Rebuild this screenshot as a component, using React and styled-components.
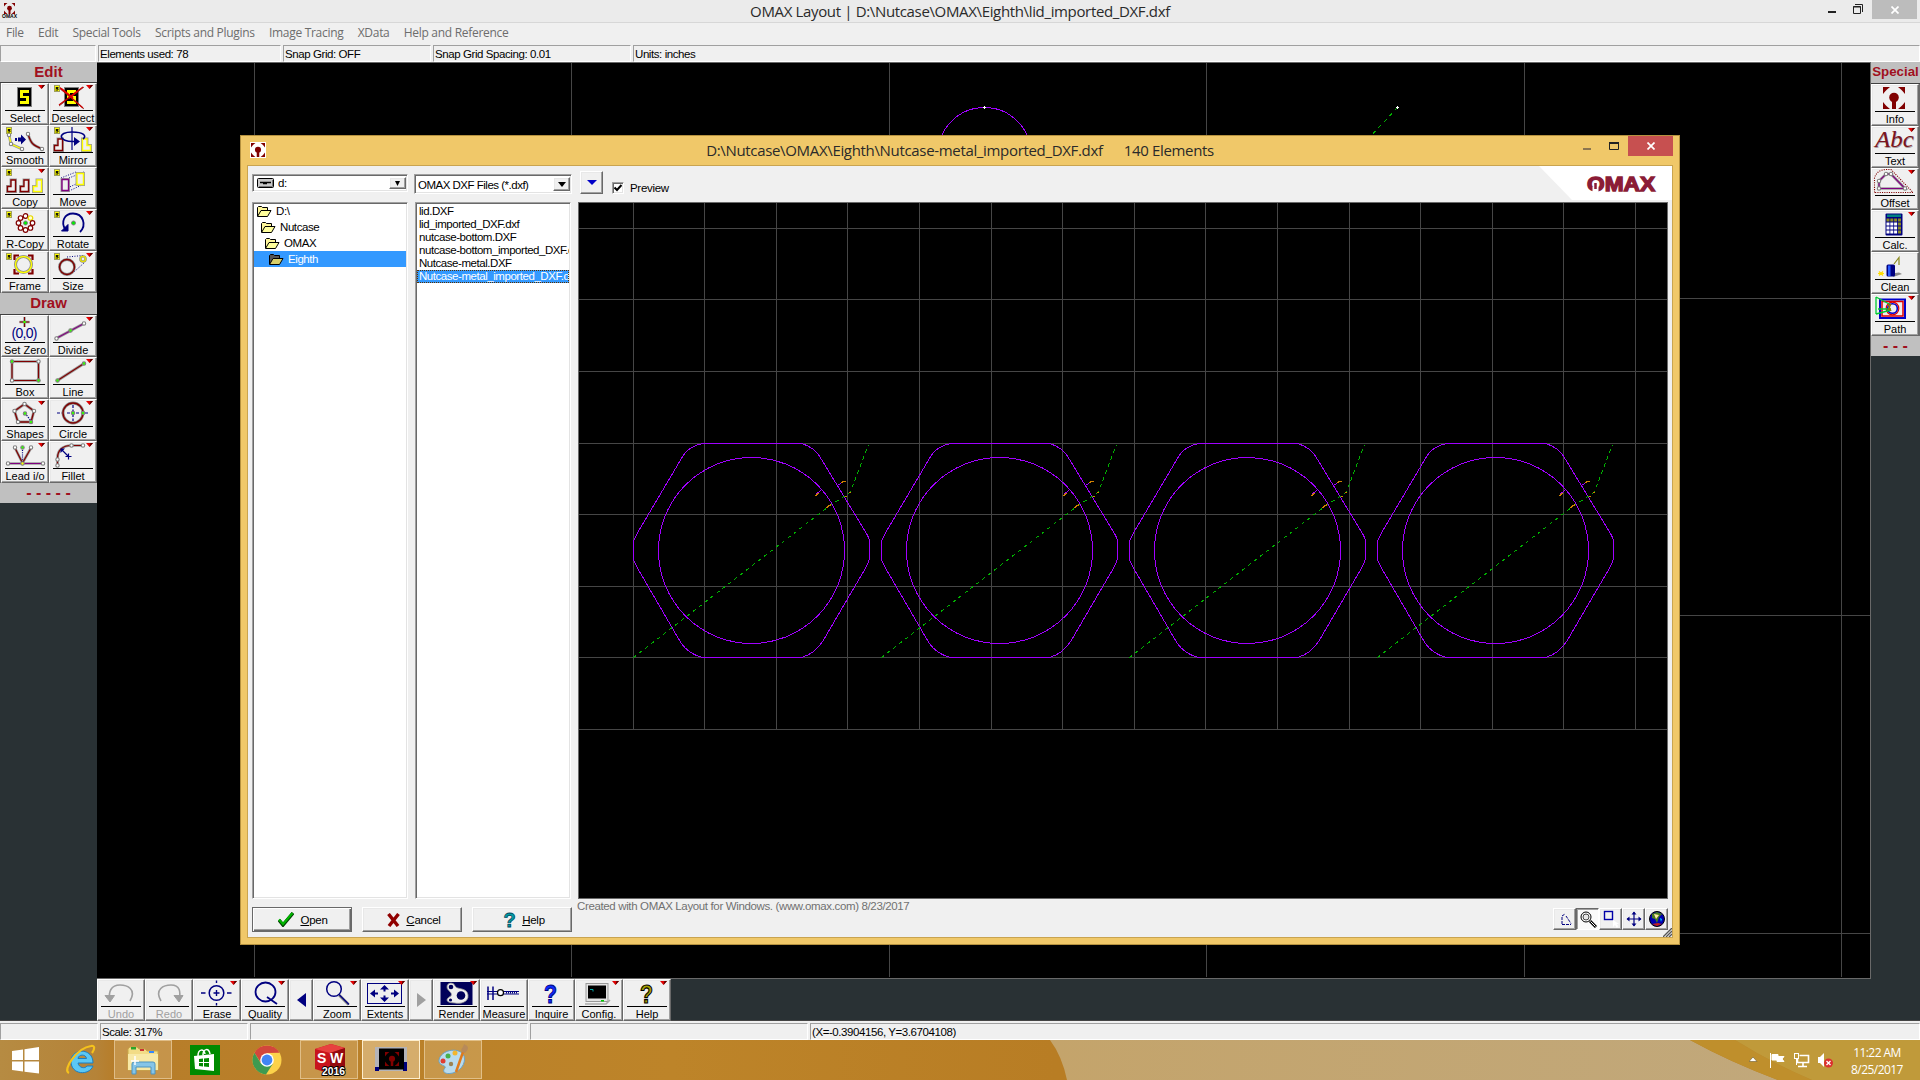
import React from 'react'
import styled, { createGlobalStyle, css } from 'styled-components'

const MAROON = '#800000'
const NAVY = '#000080'

const toolRows = {
  edit: [
    ['Select', 'select', 1, 0], ['Deselect', 'deselect', 1, 1],
    ['Smooth', 'smooth', 0, 1], ['Mirror', 'mirror', 1, 1],
    ['Copy', 'copy', 1, 1], ['Move', 'move', 0, 1],
    ['R-Copy', 'rcopy', 0, 1], ['Rotate', 'rotate', 1, 1],
    ['Frame', 'frame', 0, 1], ['Size', 'size', 1, 1],
  ],
  draw: [
    ['Set Zero', 'zero', 0, 0], ['Divide', 'divide', 1, 0],
    ['Box', 'box', 0, 0], ['Line', 'line', 1, 0],
    ['Shapes', 'shapes', 1, 0], ['Circle', 'circle', 1, 0],
    ['Lead i/o', 'lead', 1, 0], ['Fillet', 'fillet', 1, 0],
  ],
  special: [
    ['Info', 'info', 0, 0], ['Text', 'text', 1, 0], ['Offset', 'offset', 1, 0],
    ['Calc.', 'calc', 1, 0], ['Clean', 'clean', 0, 0], ['Path', 'path', 1, 0],
  ],
}

const bottomTools = [
  { label: 'Undo', icon: 'undo', w: 48, off: true },
  { label: 'Redo', icon: 'redo', w: 48, off: true },
  { label: 'Erase', icon: 'erase', w: 48, drop: true },
  { label: 'Quality', icon: 'quality', w: 48, drop: true },
  { arrow: 'left', w: 24 },
  { label: 'Zoom', icon: 'zoom', w: 48, drop: true },
  { label: 'Extents', icon: 'extents', w: 48, drop: true },
  { arrow: 'right', w: 24 },
  { label: 'Render', icon: 'render', w: 47, drop: true },
  { label: 'Measure', icon: 'measure', w: 48 },
  { label: 'Inquire', icon: 'inquire', w: 47 },
  { label: 'Config.', icon: 'config', w: 48, drop: true },
  { label: 'Help', icon: 'help', w: 48, drop: true },
]

const files = [
  'lid.DXF',
  'lid_imported_DXF.dxf',
  'nutcase-bottom.DXF',
  'nutcase-bottom_imported_DXF.dxf',
  'Nutcase-metal.DXF',
  'Nutcase-metal_imported_DXF.dxf',
]

const Node = ({ x, y, c = '#fff' }) => <circle cx={x} cy={y} r="1.700" fill={c} stroke="#808080" strokeWidth="1.100" />

const Outlined = ({ d, c, w = 1.4, fill = 'none' }) => (
  <>
    <path d={d} fill="none" stroke="#9a9a9a" strokeWidth={w + 1.5} />
    <path d={d} fill={fill} stroke={c} strokeWidth={w} />
  </>
)

const Boot = ({ x, y, c, flip }) => (
  <g transform={`translate(${x} ${y})${flip ? ' scale(-1 1)' : ''}`}>
    <Outlined d="M4 1H8.5V12.5H0.5V7.5H4Z" c={c} w={1.4} fill="#efefef" />
  </g>
)

const OmaxMark = ({ size, x = 0, y = 0 }) => (
  <svg x={x} y={y} width={size} height={size} viewBox="0 0 22 22">
    <path d="M0 0H7L4 2.5L2.5 4L0 7ZM22 0V7L19.500 4L18 2.500L15 0ZM0 22V15L2.500 18L4 19.500L7 22ZM22 22H15L18 19.500L19.500 18L22 15Z" fill={MAROON} />
    <circle cx="11" cy="10.500" r="4.800" fill={MAROON} />
    <path d="M9 13H13V22H9Z" fill={MAROON} />
  </svg>
)

const BigS = ({ x }) => (
  <g shapeRendering="crispEdges">
    <rect x={x} y="4" width="15" height="20" fill="#808080" />
    <rect x={x + 1} y="5" width="13" height="18" fill="#000" />
    <rect x={x + 3} y="7" width="9" height="14" fill="#ff0" />
    <rect x={x + 6} y="10" width="7" height="3" fill="#000" />
    <rect x={x + 2} y="15" width="7" height="3" fill="#000" />
  </g>
)

const icons = {
  select: <BigS x={16} />,
  deselect: (
    <>
      <BigS x={15} />
      <path d="M9 4L35 26M10 23L35 4" stroke="#600" strokeWidth="0.700" />
      <path d="M9 3L34 25M10 22L34 4" stroke="#c80000" strokeWidth="1.300" />
      <path d="M12 5.500L24 15M20 15L29 8" stroke="#d00" strokeWidth="1.600" />
    </>
  ),
  smooth: (
    <>
      <Outlined d="M8 10L10 19L21 24" c="#ff0" w={1.3} />
      <Outlined d="M27 9C30 19 32 20 41 24" c={MAROON} w={1.3} />
      <Node x={8} y={10} /><Node x={10} y={19} /><Node x={21} y={24} />
      <Node x={27} y={9} /><Node x={41} y={24} />
      <path d="M14 13H16V16H14ZM17 12.500H20V9.500L25 14.500L20 19.500V16.500H17Z" fill={NAVY} />
    </>
  ),
  mirror: (
    <>
      <Boot x={5} y={13} c={MAROON} />
      <Boot x={42} y={13} c="#ff0" flip />
      <path d="M23 2V25" stroke={NAVY} strokeWidth="1.200" />
      <path d="M25 16.500C9 17 8 7 23 7C35 7 38 11 34 14" fill="none" stroke={NAVY} strokeWidth="1.600" />
      <path d="M25 12L31 16.500L25 21Z" fill={NAVY} />
    </>
  ),
  copy: (
    <>
      <Boot x={6} y={12} c={MAROON} /><Boot x={19} y={12} c={MAROON} /><Boot x={32} y={12} c="#ff0" />
    </>
  ),
  move: (
    <>
      <path d="M12 11L27 5M20 11L35 5M20 24L35 17M12 24L27 17" stroke={NAVY} strokeDasharray="1 1.500" />
      <Outlined d="M13 12.500H19.500V23.500H13Z" c="#800080" fill="#efefef" />
      <Outlined d="M28 6.500H34.500V17.500H28Z" c="#ff0" fill="#efefef" />
    </>
  ),
  rcopy: (
    <>
      {[0, 1, 2, 3, 4, 5, 6, 7].map(i => {
        const a = (i * Math.PI) / 4
        return (
          <circle key={i} cx={24.5 + 7 * Math.sin(a)} cy={14 - 7 * Math.cos(a)} r="2.300"
            fill={i === 1 ? '#ffc' : '#fff'} stroke={i === 1 ? '#e6d800' : MAROON} strokeWidth="1.200" />
        )
      })}
      <circle cx="24.500" cy="14" r="2" fill="#0e0" stroke="#808080" />
    </>
  ),
  rotate: (
    <>
      <path d="M31 23C38 16 34 4.500 24 4.500C15 4.500 12 13 16 20" fill="none" stroke={NAVY} strokeWidth="1.800" />
      <path d="M12.500 22H19V15.500Z" fill={NAVY} stroke={NAVY} />
      <circle cx="24.500" cy="14" r="2" fill="#0e0" stroke="#808080" />
    </>
  ),
  frame: (
    <>
      <path d="M13.500 9V4.500H18M27 4.500H31.500V9M31.500 18V22.500H27M18 22.500H13.500V18" fill="none" stroke={MAROON} strokeWidth="2.200" />
      <circle cx="22.500" cy="13.500" r="8" fill="none" stroke="#8a8a8a" strokeWidth="3" />
      <circle cx="22.500" cy="13.500" r="8" fill="none" stroke="#ff0" strokeWidth="1.500" />
    </>
  ),
  size: (
    <>
      <path d="M18 6L34 4.500M25 21L36 11" stroke={NAVY} strokeDasharray="1 1.500" />
      <circle cx="18" cy="16" r="7.500" fill="none" stroke="#8a8a8a" strokeWidth="2.800" />
      <circle cx="18" cy="16" r="7.500" fill="none" stroke={MAROON} strokeWidth="1.400" />
      <circle cx="34" cy="8" r="2.600" fill="#efefef" stroke="#8a8a8a" strokeWidth="2.400" />
      <circle cx="34" cy="8" r="2.600" fill="none" stroke="#e8e000" strokeWidth="1.300" />
    </>
  ),
  zero: (
    <>
      <Outlined d="M23.500 2V12M18.500 7H28.500" c={MAROON} w={1} />
      <circle cx="23.500" cy="7" r="1.300" fill="#3f0" />
      <text x="10.500" y="22.500" fontSize="14" textLength="26" fill={NAVY} fontFamily="Liberation Sans">(0,0)</text>
    </>
  ),
  divide: (
    <>
      <Outlined d="M7 23.500L35 8.500" c="#800080" w={1.2} />
      <Node x={7.5} y={23.5} /><Node x={21.5} y={15.5} c="#3f0" /><Node x={35} y={8.5} />
    </>
  ),
  box: (
    <>
      <Outlined d="M11 4.500H37.500V23.500H11Z" c={MAROON} w={1.2} />
      <Node x={11} y={4.5} c="#3f0" /><Node x={37.5} y={4.5} /><Node x={11} y={23.5} /><Node x={37.5} y={23.5} c="#3f0" />
    </>
  ),
  line: (
    <>
      <Outlined d="M8.500 23.500L35 6.500" c={MAROON} w={1.2} />
      <Node x={8.5} y={23.5} c="#3f0" /><Node x={35} y={6.5} c="#3f0" />
    </>
  ),
  shapes: (
    <>
      <Outlined d="M23.500 5L33 12L30 23H17L13.500 12Z" c={MAROON} w={1.3} />
      <path d="M24 14L30 22" stroke={NAVY} strokeWidth="1.200" strokeDasharray="1.500 1" />
      <Node x={23.5} y={5} /><Node x={33} y={12} /><Node x={30} y={23} c="#3f0" /><Node x={17} y={23} /><Node x={13.5} y={12} /><Node x={24} y={14.500} c="#3f0" />
    </>
  ),
  circle: (
    <>
      <path d="M8 14H11M12.500 14H15M18 14H31M36 14H39M24 6V22" stroke={NAVY} strokeWidth="1.200" strokeDasharray="3 1.500" />
      <circle cx="24" cy="14" r="10" fill="none" stroke="#8a8a8a" strokeWidth="2.800" />
      <circle cx="24" cy="14" r="10" fill="none" stroke={MAROON} strokeWidth="1.400" />
      <Node x={24} y={14} c="#3f0" /><Node x={34} y={14} c="#3f0" />
    </>
  ),
  lead: (
    <>
      <Outlined d="M7 22.500H42" c="#800080" w={1.2} />
      <Outlined d="M14 7L21.500 22L30 7" c={MAROON} w={1.2} />
      <path d="M21.500 9V21" stroke={NAVY} strokeWidth="1.200" strokeDasharray="1 1.200" />
      <Node x={7} y={22.5} /><Node x={42} y={22.5} /><Node x={14} y={6.5} /><Node x={30} y={6.5} /><Node x={21.5} y={6.5} c="#3f0" /><Node x={21.5} y={22.5} c="#ff0" />
    </>
  ),
  fillet: (
    <>
      <Outlined d="M8.500 24V17C8.500 9 14 4.500 22 4.500H34" c={MAROON} w={1.2} />
      <path d="M19.500 12.500V18.500M16.500 15.500H22.500M19 15L13 9" stroke={NAVY} strokeWidth="1.200" />
      <path d="M11.500 7.500H16L11.500 12Z" fill={NAVY} />
      <Node x={8.5} y={18.5} /><Node x={8.5} y={24.500} /><Node x={22.5} y={4.5} /><Node x={34} y={4.5} />
    </>
  ),
  info: <OmaxMark size={22} x={12} y={3} />,
  text: (
    <>
      <text x="4.500" y="21.500" fontSize="23" textLength="39" lengthAdjust="spacingAndGlyphs" fill="#a8a0a0" fontStyle="italic" fontFamily="Liberation Serif">Abc</text>
      <text x="4" y="21" fontSize="23" textLength="39" lengthAdjust="spacingAndGlyphs" fill="#7a1420" fontStyle="italic" fontFamily="Liberation Serif">Abc</text>
    </>
  ),
  offset: (
    <>
      <path d="M3.500 24.500V10C5 4 10 1.500 16 1.500H20L42 24.500Z" fill="none" stroke={MAROON} strokeWidth="1.100" strokeDasharray="1.100 1.200" />
      <Outlined d="M8 20.500V13L15 6H20L34 20.500Z" c="#800080" w={1.2} />
      <Node x={8} y={20.5} /><Node x={34} y={20.5} /><Node x={8} y={13} /><Node x={15} y={6} /><Node x={20} y={6} />
    </>
  ),
  calc: (
    <>
      <rect x="14.500" y="3.500" width="17" height="22" rx="1" fill={NAVY} />
      <rect x="16" y="4.500" width="14" height="2.500" fill="#008080" />
      {[8, 12, 16, 20].map(y => [15.5, 19.3, 23.1, 27].map(x => (
        <rect key={x + '-' + y} x={x} y={y + 0.5} width="3" height="3" fill={x === 27 || y === 8 ? '#8a8a20' : '#fff'} />
      )))}
    </>
  ),
  clean: (
    <>
      <path d="M22 25L31 22L28 20.500L24 21Z" fill="#888" />
      <rect x="15.500" y="12.500" width="8.500" height="12" rx="1.500" fill={NAVY} />
      <rect x="17" y="13.500" width="2.500" height="10.500" fill="#2a5cff" />
      <path d="M23 12L28 5.500V13" fill="none" stroke="#8a8a20" strokeWidth="1.200" />
      <path d="M7 21.500H13M8 19.500L12 23.500M8 23.500L12 19.500" stroke="#fd0" strokeWidth="1.200" />
    </>
  ),
  path: (
    <>
      <rect x="9" y="5.500" width="25" height="18.500" fill="#efefef" stroke="#00c" strokeWidth="2" />
      <rect x="11" y="7.500" width="21" height="14.500" fill="none" stroke="#d00" strokeWidth="1.500" />
      <circle cx="21.500" cy="14.500" r="6.300" fill="#efefef" stroke="#d00" strokeWidth="1.200" />
      <circle cx="21.500" cy="14.500" r="4.800" fill="none" stroke="#00c" strokeWidth="1.600" />
      <path d="M5 3V20M5 3L20 11M5 20L20 16M7 15H20" fill="none" stroke="#0c3" strokeWidth="1.300" />
      <path d="M17 10L20 17M20 10L17 16" stroke="#a07000" strokeWidth="1.200" />
    </>
  ),
  undo: <><path d="M33 22C40 10 30 6 23 6C14 6 11 13 13 21" fill="none" stroke="#a0a0a0" strokeWidth="1.600" /><path d="M8 16.500L13 23L17.500 16.500Z" fill="#a0a0a0" stroke="#a0a0a0" /></>,
  redo: <><path d="M16 22C9 10 19 6 26 6C35 6 36 13 34 21" fill="none" stroke="#a0a0a0" strokeWidth="1.600" /><path d="M38 16.500L34 23L29 16.500Z" fill="#a0a0a0" stroke="#a0a0a0" /></>,
  erase: (
    <>
      <circle cx="23.500" cy="14" r="7.300" fill="none" stroke={NAVY} strokeWidth="1.500" />
      <path d="M8 14H12.500M34 14H38.500M23.500 1.500V4M23.500 24V26.500M20.500 14H26.500M23.500 11V17" stroke={NAVY} strokeWidth="1.400" />
    </>
  ),
  quality: (
    <>
      <ellipse cx="24.500" cy="13" rx="10" ry="9.500" fill="none" stroke={NAVY} strokeWidth="1.800" />
      <path d="M26 18L36 25" stroke={NAVY} strokeWidth="1.800" />
    </>
  ),
  zoom: (
    <>
      <circle cx="21" cy="10" r="7.300" fill="none" stroke={NAVY} strokeWidth="1.500" />
      <path d="M26 16L35.500 25.500" stroke="#808080" strokeWidth="2.600" />
      <path d="M26 15.500L36 25.500" stroke={NAVY} strokeWidth="1.200" />
    </>
  ),
  extents: (
    <>
      <rect x="6.500" y="4.500" width="34" height="20" fill="#efefef" stroke={NAVY} />
      <path d="M9 14.500L14 10.500V18.500ZM38 14.500L33 10.500V18.500ZM23.500 6L28 10.500H19ZM23.500 23L28 18.500H19Z" fill={NAVY} />
      <path d="M14 14.500H17M30 14.500H33M23.500 10V12.500M23.500 16.500V19" stroke={NAVY} strokeWidth="2" />
    </>
  ),
  render: (
    <>
      <rect x="7.500" y="3" width="32" height="23" fill="#00005a" />
      <path d="M14 8C14 3 21 3 22 7C24 11 34 8 35 16C36 24 26 25 22 24L17 23.500C12 22 14 19 18 17C20 13 14 12 14 8Z" fill="#efefef" stroke="#999" strokeWidth="0.800" />
      <circle cx="18" cy="8" r="2.300" fill="#00005a" /><circle cx="28" cy="16.500" r="4.300" fill="#00005a" /><circle cx="17.500" cy="21" r="1.600" fill="#00005a" />
    </>
  ),
  measure: (
    <>
      <path d="M7 12.500H39M7 15H39" stroke={NAVY} strokeWidth="1" />
      <path d="M26 13.700H38" stroke={NAVY} strokeWidth="1.400" strokeDasharray="1 1" />
      <path d="M8 7.500V21M13 7.500V21" stroke={NAVY} strokeWidth="1.500" />
      <circle cx="20.500" cy="13.700" r="3" fill="#fff" stroke="#000" strokeWidth="1.200" />
    </>
  ),
  inquire: (
    <text x="16" y="23.500" fontSize="26" textLength="13" lengthAdjust="spacingAndGlyphs" fontWeight="bold" fill="#0a2cff" stroke={NAVY} strokeWidth="1" fontFamily="Liberation Sans">?</text>
  ),
  config: (
    <>
      <rect x="11" y="4.500" width="22" height="18" fill="#e4e4e4" stroke="#999" />
      <path d="M10 25H31L35 21" fill="none" stroke="#aaa" strokeWidth="1.600" />
      <rect x="13" y="6.500" width="18" height="13" fill="#000" />
      <path d="M15 10.500H18V12.500" stroke="#0aa" fill="none" />
      <rect x="26" y="21" width="3" height="1.500" fill="#0c0" />
    </>
  ),
  help: (
    <text x="17" y="23.500" fontSize="26" textLength="13" lengthAdjust="spacingAndGlyphs" fontWeight="bold" fill="#a8a000" stroke="#000" strokeWidth="1.200" fontFamily="Liberation Sans">?</text>
  ),
}

const ToolIcon = ({ name, drop, tag }) => (
  <IconSvg viewBox="1 1 46 26">
    {icons[name]}
    {tag ? (
      <>
        <rect x="5.500" y="2.500" width="5" height="6" fill="#ff0" stroke="#a0a060" />
        <path d="M9.500 4.500H7V5.500H9V7H6.500" fill="none" stroke="#000" strokeWidth="0.900" />
      </>
    ) : null}
    {drop ? <><path d="M37 2H44L40.500 6Z" fill="#e00000" /><path d="M40.500 6L44 2H41.500Z" fill="#500" /></> : null}
  </IconSvg>
)

const Tool = ({ label, icon, drop, tag, off, w }) => (
  <ToolButton $w={w} $off={off}>
    <ToolIcon name={icon} drop={drop} tag={tag} />
    <Rule $off={off} />
    <ToolLabel>{label}</ToolLabel>
  </ToolButton>
)

const ToolSet = ({ rows }) => rows.map(([label, icon, drop, tag]) => (
  <Tool key={label} label={label} icon={icon} drop={drop} tag={tag} />
))

const NutPart = ({ dx }) => (
  <g transform={`translate(${dx} 0)`} fill="none" strokeWidth="1">
    <path d="M702.500 443.500H801.500C810 446 816 450 820 457L866.500 533.500Q869.500 538 869.500 542V559Q868 564 865 569L823.500 640C818 649 811 655 801.500 657.500H702.500C692 655 686 650 681 643L638 569Q634 562 633.500 559V542Q634 539 638 532L683.500 455C688 449 694 445 702.500 443.500Z" stroke="#a000ff" />
    <circle cx="751.500" cy="550.500" r="93" stroke="#a000ff" />
    <path d="M633.500 657.500L828 507L850 492.500L868.500 445" stroke="#00b000" strokeDasharray="3.500 4" />
    <path d="M816 494.500L821.500 489.500M838.500 485L842 482.500" stroke="#a000ff" />
    <path d="M815.500 496L818.500 493M841 482.500L845.500 481M826 508L831 504.500M845 497L846.500 496M849.500 493L851 492" stroke="#d08000" strokeWidth="1.200" />
  </g>
)

const vLines = [...Array(15)].map((_, i) => Math.floor(633 + i * 71.6) + 0.5)
const hLines = [228.5, 299.5, 371.5, 443.5, 514.5, 586.5, 657.5, 729.5]

const Preview = () => (
  <svg width="1088" height="695" viewBox="579 203 1088 695" shapeRendering="crispEdges">
    <g stroke="#464646">
      {vLines.map(x => <path key={x} d={`M${x} 203V729`} />)}
      {hLines.map(y => <path key={y} d={`M579 ${y}H1667`} />)}
    </g>
    {[0, 248, 496, 744].map(dx => <NutPart key={dx} dx={dx} />)}
  </svg>
)

const MainDrawing = () => (
  <svg width="1773" height="915" viewBox="97 63 1773 915" shapeRendering="crispEdges">
    <g stroke="#464646">
      {[254.5, 571.5, 889.5, 1206.5, 1524.5, 1841.5].map(x => <path key={x} d={`M${x} 63V977`} />)}
      {[298.5, 615.5, 933.5].map(y => <path key={y} d={`M1670 ${y}H1870`} />)}
    </g>
    <circle cx="984.500" cy="154" r="46.500" fill="none" stroke="#a000ff" />
    <path d="M1397.500 107.500L1369 138" stroke="#00b000" strokeDasharray="4 4" />
    <path d="M983 107.500H986M984.500 106V109M1396 107.500H1399M1397.500 106V109" stroke="#fff" />
  </svg>
)

const Folder = ({ open }) => (
  <svg width="16" height="13" viewBox="0 0 16 13">
    <path d="M1.500 11V2.500L2.500 1.500H5.500L6.500 2.500H11.500V5" fill={open ? '#555' : '#fff79a'} stroke="#000" />
    <path d="M1.500 11.500L5 5.500H15L11.500 11.500Z" fill={open ? '#d8cf6a' : '#ffff9c'} stroke="#000" />
  </svg>
)

const Triangle = ({ color = '#000', w = 7 }) => (
  <svg width={w} height="5" viewBox="0 0 8 5" preserveAspectRatio="none"><path d="M0 0H8L4 5Z" fill={color} /></svg>
)

const dirs = [['D:\\', 0], ['Nutcase', 4], ['OMAX', 8], ['Eighth', 12]]

const OpenDialog = () => (
  <Dialog>
    <DialogTitle>
      <DialogMark><OmaxMark size={14} /></DialogMark>
      <DialogCaption>{'D:\\Nutcase\\OMAX\\Eighth\\Nutcase-metal_imported_DXF.dxf'}<span>140 Elements</span></DialogCaption>
      <WindowButtons>
        <svg width="45" height="20"><path d="M3 13H11" stroke="#8c7650" strokeWidth="2" /><path d="M29.500 7.500H38.500V13.500H29.500Z" fill="none" stroke="#222" /><path d="M29 7H39" stroke="#222" strokeWidth="2" /></svg>
        <CloseBox $w={45} $h={20} $c="#c75050">
          <svg width="8" height="8"><path d="M0.500 0.500L7.500 7.500M7.500 0.500L0.500 7.500" stroke="#fff" strokeWidth="1.700" /></svg>
        </CloseBox>
      </WindowButtons>
    </DialogTitle>
    <DialogBody>
      <DialogTop>
        <Combo $w={156} $h={18}>
          <DriveIcon width="17" height="10"><rect x="0.500" y="0.500" width="16" height="9" rx="1" fill="#c8c8c8" stroke="#000" /><path d="M2 8.500H15.500V2" fill="none" stroke="#777" /><path d="M3 4.500H14M6 5.500H10" stroke="#000" strokeWidth="1.500" /></DriveIcon>
          <ComboText>d:</ComboText>
          <ComboArrow><Triangle w={5} /></ComboArrow>
        </Combo>
        <Combo $w={158} $h={20} $second>
          <ComboText $tight>OMAX DXF Files (*.dxf)</ComboText>
          <ComboArrow><Triangle w={8} /></ComboArrow>
        </Combo>
        <DropButton><Triangle color="#0000c8" w={10} /></DropButton>
        <CheckBox><svg width="8" height="8"><path d="M0.500 3.500L3 6L7.500 1" fill="none" stroke="#000" strokeWidth="2" /></svg></CheckBox>
        <CheckLabel>Preview</CheckLabel>
        <Logo width="133" height="34">
          <path d="M0 0H133V34H33Z" fill="#fff" />
          <text x="48" y="25" fontSize="19.500" fontWeight="bold" fontFamily="Liberation Sans" fill="#8b1c36" stroke="#8b1c36" strokeWidth="1.300" textLength="68" lengthAdjust="spacingAndGlyphs">OMAX</text>
          <path d="M53.500 21V27H59.500V21Z" fill="#fff" />
          <path d="M56.500 17V23" stroke="#8b1c36" strokeWidth="2.500" />
        </Logo>
      </DialogTop>
      <Panes>
        <ListBox>
          {dirs.map(([name, indent]) => (
            <DirRow key={name} $indent={indent} $on={name === 'Eighth'}><Folder open={name === 'Eighth'} />{name}</DirRow>
          ))}
        </ListBox>
        <ListBox $second>
          {files.map((f, i) => <FileRow key={f} $on={i === 5}>{f}</FileRow>)}
        </ListBox>
        <PreviewBox><Preview /></PreviewBox>
      </Panes>
      <DialogFoot>
        <FootButton $main>
          <svg width="16" height="15"><path d="M1 8L5 13L15 1" fill="none" stroke="#004000" strokeWidth="3.400" /><path d="M1 7.500L5 12L14.500 1" fill="none" stroke="#00b400" strokeWidth="2.200" /></svg>
          <span><u>O</u>pen</span>
        </FootButton>
        <FootButton>
          <svg width="13" height="14"><path d="M1.500 1L11 13M11.500 1L2 13" stroke="#900000" strokeWidth="3.400" /></svg>
          <span><u>C</u>ancel</span>
        </FootButton>
        <FootButton>
          <svg width="13" height="17"><text x="0.500" y="15.500" fontSize="20" fontWeight="bold" fill="#00a0a8" stroke="#004a60" strokeWidth="0.800" fontFamily="Liberation Sans">?</text></svg>
          <span><u>H</u>elp</span>
        </FootButton>
        <Created>Created with OMAX Layout for Windows. (www.omax.com) 8/23/2017</Created>
        <SmallTools>
          <SmallTool><svg width="18" height="18"><path d="M6 14V6L9 4M10 6L15 13.500M6 14.500H15" fill="none" stroke={NAVY} strokeDasharray="3 1" /></svg></SmallTool>
          <SmallTool $down><svg width="18" height="18"><circle cx="7" cy="7" r="5" fill="#fff" stroke="#000" /><circle cx="7" cy="7" r="3" fill="#e8e8e8" stroke="#444" /><path d="M11 11L17 17" stroke="#000" strokeWidth="3" /><path d="M11.500 11.500L16.500 16.500" stroke="#fff" /></svg></SmallTool>
          <SmallTool><svg width="18" height="18"><rect x="2.500" y="1.500" width="8" height="8" fill="none" stroke="#0000a8" strokeWidth="1.400" /><path d="M11 10V17L13 15L15 18L16 16L14.500 14H17Z" fill="#fff" /></svg></SmallTool>
          <SmallTool><svg width="18" height="18"><path d="M2 9H16M9 2V16" stroke={NAVY} strokeWidth="1.200" /><path d="M1.500 9L4.500 6.500V11.500ZM16.500 9L13.500 6.500V11.500ZM9 1.500L11.500 4.500H6.500ZM9 16.500L11.500 13.500H6.500Z" fill={NAVY} /></svg></SmallTool>
          <SmallTool><svg width="18" height="18"><circle cx="9" cy="9" r="7.500" fill="#0000b0" stroke="#000" /><path d="M4 4L9 2L14 4L11 7L9 13L7 9L4 8Z" fill="#487a20" /><path d="M6 4L11 5L8 9Z" fill="#ffe9a0" /><path d="M4 14L9 16L14 14L10 13Z" fill="#c02020" /><path d="M12 8L14 9L13 12Z" fill="#0cf" /></svg></SmallTool>
        </SmallTools>
      </DialogFoot>
      <Grip width="9" height="9"><path d="M0 9L9 0M3 9L9 3M6 9L9 6" stroke="#555" strokeWidth="1.300" /></Grip>
    </DialogBody>
  </Dialog>
)

const Taskbar = () => (
  <TaskbarBox>
    <Wallpaper width="1920" height="40">
      <defs>
        <linearGradient id="gold"><stop offset="0" stopColor="#b68b42" /><stop offset="0.050" stopColor="#b58338" /><stop offset="0.060" stopColor="#b77d29" /><stop offset="0.350" stopColor="#bd8429" /><stop offset="0.550" stopColor="#b87d24" /><stop offset="1" stopColor="#b88128" /></linearGradient>
        <linearGradient id="sand"><stop offset="0" stopColor="#c4a46b" /><stop offset="1" stopColor="#c1a87b" /></linearGradient>
      </defs>
      <rect width="1920" height="40" fill="url(#gold)" />
      <path d="M1050 0Q1062 16 1067 40H1778Q1730 22 1690 0Z" fill="url(#sand)" />
      <path d="M1690 0Q1730 22 1778 40H1812Q1770 22 1735 0Z" fill="#bf8f2c" />
      <path d="M1735 0Q1770 22 1812 40H1920V0Z" fill="#c09a3a" />
    </Wallpaper>
    <TaskItem $w={51}>
      <svg width="28" height="27"><path d="M0 4L11 2.500V13H0ZM12.500 2.200L27 0V13H12.500ZM0 14.500H11V24.500L0 23ZM12.500 14.500H27V26.500L12.500 24.700Z" fill="#fff" /></svg>
    </TaskItem>
    <TaskItem $w={60}>
      <svg width="32" height="32">
        <path d="M28 19H13C14 24 20 25 22 22H28C24 32 6 31 6 17.500C6 4 28 3 28 19Z" fill="#5cc8f4" stroke="#1b7ec2" />
        <path d="M13 14.500H21.500C21 10 13.500 10 13 14.500Z" fill="#b68b42" stroke="#1b7ec2" />
        <path d="M4 29C-3 26 12 4 26 2C30 1 30 5 27 9" fill="none" stroke="#f5c21c" strokeWidth="2.200" />
      </svg>
    </TaskItem>
    <TaskItem $w={58} $open $ml={3}>
      <svg width="32" height="32">
        <path d="M1 5L3 3H10L12 5H18L20 7H31V26H1Z" fill="#f2dc86" stroke="#c9a94a" />
        <rect x="4" y="3" width="5" height="2.500" fill="#2aa52a" /><rect x="13" y="5" width="4" height="2" fill="#c33" /><rect x="22" y="7" width="5" height="2" fill="#38f" />
        <path d="M1 10H31V26H1Z" fill="#f8e9a6" />
        <path d="M5 30V20Q5 18 7 18H26Q28 18 28 20V30H24V23H9V30Z" fill="#86c5e8" stroke="#4c94c0" />
        <path d="M8 12V21M4 17H12" stroke="#fff" strokeWidth="1.500" />
      </svg>
    </TaskItem>
    <TaskItem $w={66}>
      <StoreTile>
        <svg width="30" height="30"><path d="M4 11L24 9V26L5 24Z" fill="#fff" /><path d="M8 11C8 4 14 3 15 9M13 10C13 4 19 2 20 9" fill="none" stroke="#fff" strokeWidth="1.500" /><path d="M9 14L13 13.500V17H9ZM14 13.400L19 13V17H14ZM9 18H13V21.500L9 21ZM14 18H19V22L14 21.600Z" fill="#008a00" /></svg>
      </StoreTile>
    </TaskItem>
    <TaskItem $w={58}>
      <svg width="30" height="30" viewBox="-15 -15 30 30">
        <circle r="14.500" fill="#fcd24a" />
        <path d="M-12.600 -7.300A14.500 14.500 0 0 1 12.600 -7.300L0 -7L-6 3Z" fill="#d2473c" />
        <path d="M-12.600 -7.300A14.500 14.500 0 0 0 -1 14.500L6 3.500L-6 3.500Z" fill="#3f9a50" />
        <circle r="6.800" fill="#fff" /><circle r="5.400" fill="#4285f4" />
      </svg>
    </TaskItem>
    <TaskItem $w={58} $open $ml={4}>
      <SwIcon width="34" height="34">
        <path d="M3 6L19 1L33 5V24L19 31L3 26Z" fill="#c8141c" /><path d="M3 6L19 1L33 5L18 10Z" fill="#e8413f" /><path d="M18 10L33 5V24L18 31Z" fill="#93090f" />
        <text x="5" y="20" fontSize="14" fontWeight="bold" fill="#fff" fontFamily="Liberation Sans">S</text>
        <text x="18" y="20" fontSize="14" fontWeight="bold" fill="#fff" fontFamily="Liberation Sans">W</text>
        <text x="10" y="32" fontSize="11.500" fontWeight="bold" fill="#fff" stroke="#000" strokeWidth="2" paintOrder="stroke" textLength="23" lengthAdjust="spacingAndGlyphs" fontFamily="Liberation Sans">2016</text>
      </SwIcon>
    </TaskItem>
    <TaskItem $w={58} $open $active $ml={4}>
      <svg width="32" height="25"><rect width="32" height="24" fill="#b4b4b8" /><rect y="20" width="4" height="4" fill="#00007a" /><rect x="28" y="15" width="4" height="9" fill="#00007a" /><rect x="4" y="1.500" width="25" height="21" fill="#000" /><OmaxMark size={14} x={10} y={5} /></svg>
    </TaskItem>
    <TaskItem $w={58} $open $ml={4}>
      <svg width="32" height="32"><path d="M2 16C4 6 20 3 26 10C30 16 26 26 16 29C7 31 5 27 8 24C10 21 1 22 2 16Z" fill="#b9dbee" stroke="#6aa2c4" /><circle cx="6" cy="17" r="2.500" fill="#e03c31" /><circle cx="11" cy="12" r="2.500" fill="#46b04a" /><circle cx="18" cy="9" r="2.500" fill="#f3b62e" /><circle cx="14" cy="20" r="2.200" fill="#9c8352" /><path d="M19 28L26 8" stroke="#e07a1c" strokeWidth="2.500" /><path d="M25 8C23 4 26 5 27 0C31 2 33 4 28 9Z" fill="#b78a5a" /></svg>
    </TaskItem>
    <Tray>
      <svg width="86" height="18">
        <path d="M0 10.500L4 6L8 10.500Z" fill="#fff" stroke="#6b5b2b" strokeWidth="0.600" />
        <path d="M21.500 2V17M23 3.500H29V5.500H35L33 8L35 10.500H28V9H23Z" fill="#fff" stroke="#fff" strokeWidth="1" />
        <path d="M50.500 4.500H59.500V11.500H48.500V8M54 12V15M49 15.500H58" fill="none" stroke="#fff" strokeWidth="1.600" /><rect x="45.500" y="2.500" width="4" height="5" fill="none" stroke="#fff" /><path d="M47.500 8V14" stroke="#fff" />
        <path d="M69 6H71L75 2V16L71 12H69Z" fill="#fff" /><circle cx="79.500" cy="12" r="4.500" fill="#dc2f2f" /><path d="M77.500 10L81.500 14M81.500 10L77.500 14" stroke="#fff" strokeWidth="1.300" />
      </svg>
      <Clock><span>11:22 AM</span><span>8/25/2017</span></Clock>
    </Tray>
  </TaskbarBox>
)

const App = () => {
  return (
    <Screen>
      <GlobalStyle />
      <TitleBar>
        <TitleMark><OmaxMark size={11} /><em>OMAX</em></TitleMark>
        <Caption>{'OMAX Layout | D:\\Nutcase\\OMAX\\Eighth\\lid_imported_DXF.dxf'}</Caption>
        <TitleButtons>
          <svg width="44" height="19"><path d="M0 12H8" stroke="#222" strokeWidth="2" /><path d="M25.500 6.500H32.500V13.500H25.500ZM25 7H33M27 4.500H34.500V12" fill="none" stroke="#222" /></svg>
          <CloseBox $w={45} $h={19} $c="#bcbcbc">
            <svg width="8" height="8"><path d="M0.500 0.500L7.500 7.500M7.500 0.500L0.500 7.500" stroke="#fff" strokeWidth="1.700" /></svg>
          </CloseBox>
        </TitleButtons>
      </TitleBar>
      <MenuBar>
        {['File', 'Edit', 'Special Tools', 'Scripts and Plugins', 'Image Tracing', 'XData', 'Help and Reference'].map(m => (
          <MenuItem key={m}>{m}</MenuItem>
        ))}
      </MenuBar>
      <StatusBar>
        <Cell $w={96} />
        <Cell $w={183}>Elements used: 78</Cell>
        <Cell $w={148}>Snap Grid: OFF</Cell>
        <Cell $w={198}>Snap Grid Spacing: 0.01</Cell>
        <Cell>Units: inches</Cell>
      </StatusBar>
      <Workspace>
        <Side $w={97}>
          <SideHead>Edit</SideHead>
          <ToolGrid><ToolSet rows={toolRows.edit} /></ToolGrid>
          <SideHead $tall>Draw</SideHead>
          <ToolGrid><ToolSet rows={toolRows.draw} /></ToolGrid>
          <SideFoot>- - - - -</SideFoot>
        </Side>
        <Center>
          <Canvas><MainDrawing /></Canvas>
          <BottomTools>
            {bottomTools.map((t, i) => t.arrow ? (
              <ArrowButton key={i} $w={t.w}>
                <svg width="9" height="14"><path d={t.arrow === 'left' ? 'M9 0V14L0 7Z' : 'M0 0V14L9 7Z'} fill={t.arrow === 'left' ? NAVY : '#a0a0a0'} /></svg>
              </ArrowButton>
            ) : <Tool key={i} {...t} />)}
          </BottomTools>
        </Center>
        <Side $w={49}>
          <SideHead $tall $small>Special</SideHead>
          <ToolGrid $one><ToolSet rows={toolRows.special} /></ToolGrid>
          <SideFoot>- - -</SideFoot>
        </Side>
      </Workspace>
      <StatusBar $bottom>
        <Cell $w={98} />
        <Cell $w={148}>Scale: 317%</Cell>
        <Cell $w={278} />
        <Cell $w={278} />
        <Cell>(X=-0.3904156, Y=3.6704108)</Cell>
      </StatusBar>
      <Taskbar />
      <OpenDialog />
    </Screen>
  )
}

export default App

const GlobalStyle = createGlobalStyle`
  body{
    margin: 0;
    background: #293134;
  }
  *{
    box-sizing: border-box;
  }
  svg{
    display: block;
    flex: none;
  }
`

const sansSerif = css`
  font-family: 'Liberation Sans', sans-serif;
  font-size: 11.5px;
  letter-spacing: -0.42px;
  white-space: pre;
`

const segoe = css`
  font-family: 'Open Sans', sans-serif;
  white-space: pre;
`

const raised = css`
  border: 1px solid;
  border-color: #fff #696969 #696969 #fff;
  box-shadow: inset -1px -1px 0 #a0a0a0, inset 1px 1px 0 #e8e8e8;
  background: #f0f0f0;
`

const sunken = css`
  border: 1px solid;
  border-color: #a0a0a0 #fff #fff #a0a0a0;
  box-shadow: inset 1px 1px 0 #696969, inset -1px -1px 0 #e3e3e3;
  background: #fff;
`

const Screen = styled.div`
  position: relative;
  display: flex;
  flex-direction: column;
  width: 1920px;
  height: 1080px;
  overflow: hidden;
`

const TitleBar = styled.div`
  display: grid;
  grid-template-columns: 140px 1fr 140px;
  height: 23px;
  background: #ebebeb;
  border-bottom: 1px solid #d7d7d7;
`

const TitleMark = styled.div`
  padding: 3px 0 0 4px;
  em{
    display: block;
    font: bold 5px/5px 'Liberation Sans', sans-serif;
    margin-left: -2px;
  }
`

const Caption = styled.div`
  ${segoe}
  font-size: 15px;
  line-height: 22px;
  letter-spacing: -0.35px;
  color: #2a2a2a;
  text-align: center;
`

const TitleButtons = styled.div`
  display: flex;
  justify-content: flex-end;
  padding-right: 3px;
`

const CloseBox = styled.div`
  display: flex;
  align-items: center;
  justify-content: center;
  width: ${p => p.$w}px;
  height: ${p => p.$h}px;
  background: ${p => p.$c};
`

const MenuBar = styled.div`
  display: flex;
  gap: 14.3px;
  height: 22px;
  padding-left: 6px;
  background: #f0f0f0;
`

const MenuItem = styled.div`
  ${segoe}
  font-size: 12px;
  line-height: 20px;
  letter-spacing: -0.3px;
  color: #6d6d6d;
`

const StatusBar = styled.div`
  display: flex;
  gap: 2px;
  height: ${p => (p.$bottom ? 19 : 17)}px;
  padding-top: ${p => (p.$bottom ? 2 : 0)}px;
  background: #f0f0f0;
`

const Cell = styled.div`
  ${sansSerif}
  ${p => (p.$w ? `width: ${p.$w}px;` : 'flex: 1;')}
  height: 17px;
  padding-left: 1px;
  line-height: 16px;
  border: 1px solid;
  border-color: #a0a0a0 #fff #fff #a0a0a0;
  color: #000;
`

const Workspace = styled.div`
  display: flex;
  height: 959px;
  background: #293134;
  border-bottom: 1px solid #444;
`

const Side = styled.div`
  width: ${p => p.$w}px;
  flex: none;
`

const SideHead = styled.div`
  height: ${p => (p.$tall ? 22 : 21)}px;
  line-height: 20px;
  background: #c0c0c0;
  color: #a01020;
  text-align: center;
  font-family: 'Liberation Sans', sans-serif;
  font-weight: bold;
  font-size: ${p => (p.$small ? 13.3 : 15)}px;
  border-bottom: 1px solid #404040;
`

const ToolGrid = styled.div`
  display: grid;
  grid-template-columns: ${p => (p.$one ? '48px' : '48px 48px')};
  grid-auto-rows: 42px;
  width: ${p => (p.$one ? 49 : 97)}px;
  padding-left: ${p => (p.$one ? 0 : 1)}px;
  background: #696969;
`

const SideFoot = styled.div`
  height: 20px;
  background: #c0c0c0;
  color: #a01020;
  text-align: center;
  font: bold 16px/19px 'Liberation Sans', sans-serif;
`

const ToolButton = styled.button`
  ${raised}
  display: flex;
  flex-direction: column;
  align-items: center;
  width: ${p => p.$w || 48}px;
  height: 42px;
  padding: 0;
  color: ${p => (p.$off ? '#a0a0a0' : '#000')};
`

const IconSvg = styled.svg`
  width: 46px;
  height: 26px;
  overflow: visible;
`

const Rule = styled.div`
  flex: none;
  width: 40px;
  height: 1px;
  background: #000;
`

const ToolLabel = styled.div`
  font: 11px/13px 'Liberation Sans', sans-serif;
  padding-top: 1px;
  white-space: nowrap;
`

const ArrowButton = styled.button`
  ${raised}
  display: flex;
  align-items: center;
  justify-content: center;
  width: ${p => p.$w}px;
  height: 42px;
  padding: 0;
`

const Center = styled.div`
  flex: 1;
`

const Canvas = styled.div`
  height: 917px;
  width: 1774px;
  background: #000;
  border: 1px solid #696969;
  border-left: 0;
`

const BottomTools = styled.div`
  display: flex;
`

const Dialog = styled.div`
  position: absolute;
  left: 240px;
  top: 135px;
  width: 1440px;
  height: 810px;
  background: #f0c869;
  border: 1px solid #b5913f;
  padding: 0 6px;
`

const DialogTitle = styled.div`
  display: grid;
  grid-template-columns: 140px 1fr 140px;
  height: 29px;
`

const DialogMark = styled.div`
  width: 16px;
  height: 16px;
  margin: 6px 0 0 3px;
  padding: 1px;
  background: #fff;
`

const DialogCaption = styled.div`
  ${segoe}
  font-size: 15px;
  line-height: 28px;
  letter-spacing: -0.33px;
  color: #2a2a2a;
  text-align: center;
  span{
    margin-left: 21px;
  }
`

const WindowButtons = styled.div`
  display: flex;
  justify-content: flex-end;
  gap: 3px;
`

const DialogBody = styled.div`
  position: relative;
  display: flex;
  flex-direction: column;
  width: 1426px;
  height: 773px;
  background: #f0f0f0;
  border: 1px solid #c9a450;
`

const DialogTop = styled.div`
  display: flex;
  align-items: flex-start;
  height: 36px;
  padding: 8px 0 0 4px;
`

const Combo = styled.div`
  ${sunken}
  display: flex;
  align-items: center;
  width: ${p => p.$w}px;
  height: ${p => p.$h}px;
  margin-right: 6px;
  padding: 2px 1px 2px ${p => (p.$second ? 3 : 4)}px;
`

const DriveIcon = styled.svg`
  margin-right: 4px;
`

const ComboText = styled.div`
  ${sansSerif}
  flex: 1;
  ${p => p.$tight && 'letter-spacing: -0.5px; padding-top: 1px;'}
`

const ComboArrow = styled.div`
  ${raised}
  display: flex;
  align-items: center;
  justify-content: center;
  width: 17px;
  height: 100%;
`

const DropButton = styled.button`
  ${raised}
  display: flex;
  align-items: center;
  justify-content: center;
  width: 23px;
  height: 23px;
  margin: -3px 9px 0 2px;
  padding: 0;
`

const CheckBox = styled.div`
  ${sunken}
  display: flex;
  align-items: center;
  justify-content: center;
  width: 12px;
  height: 12px;
  margin-top: 8px;
`

const CheckLabel = styled.div`
  ${sansSerif}
  letter-spacing: -0.3px;
  margin: 8px 0 0 6px;
`

const Logo = styled.svg`
  margin: -8px 0 0 auto;
`

const Panes = styled.div`
  display: flex;
  height: 697px;
  padding-left: 4px;
`

const ListBox = styled.div`
  ${sunken}
  width: 156px;
  height: 697px;
  margin-right: 7px;
  padding: ${p => (p.$second ? '2px 1px 0' : '0 1px 0')};
  overflow: hidden;
`

const DirRow = styled.div`
  ${sansSerif}
  display: flex;
  align-items: center;
  gap: 4px;
  height: 16px;
  padding-left: ${p => p.$indent + 2}px;
  color: ${p => (p.$on ? '#fff' : '#000')};
  background: ${p => (p.$on ? '#3399ff' : 'none')};
`

const FileRow = styled.div`
  ${sansSerif}
  height: 13px;
  line-height: 12px;
  padding-left: 2px;
  letter-spacing: -0.45px;
  overflow: hidden;
  color: ${p => (p.$on ? '#fff' : '#000')};
  ${p => p.$on && css`
    background: #3399ff;
    outline: 1px dotted #5a3000;
    outline-offset: -1px;
  `}
`

const PreviewBox = styled.div`
  width: 1090px;
  height: 697px;
  background: #000;
  border: 1px solid #696969;
`

const DialogFoot = styled.div`
  display: flex;
  align-items: flex-start;
  gap: 10px;
  padding: 8px 4px 0;
`

const FootButton = styled.button`
  ${raised}
  ${sansSerif}
  letter-spacing: -0.25px;
  display: flex;
  align-items: center;
  justify-content: center;
  gap: 6px;
  width: 100px;
  height: 25px;
  padding: 0 0 0 4px;
  ${p => p.$main && css`
    padding-left: 2px;
    border-color: #696969;
    box-shadow: inset 1px 1px 0 #fff, inset -1px -1px 0 #696969, inset -2px -2px 0 #a0a0a0;
  `}
`

const Created = styled.div`
  ${sansSerif}
  letter-spacing: -0.36px;
  color: #707070;
  margin: -7px 0 0 -5px;
`

const SmallTools = styled.div`
  display: flex;
  margin: 1px 0 0 auto;
`

const SmallTool = styled.button`
  ${raised}
  display: flex;
  align-items: center;
  justify-content: center;
  width: 23px;
  height: 22px;
  padding: 0;
  ${p => p.$down && css`
    background: #fafafa;
    border-color: #696969 #fff #fff #696969;
    box-shadow: inset 1px 1px 0 #a0a0a0;
  `}
`

const Grip = styled.svg`
  position: absolute;
  right: 0;
  bottom: 0;
`

const TaskbarBox = styled.div`
  position: relative;
  display: flex;
  height: 40px;
`

const Wallpaper = styled.svg`
  position: absolute;
  left: 0;
  top: 0;
`

const TaskItem = styled.div`
  position: relative;
  display: flex;
  align-items: center;
  justify-content: center;
  width: ${p => p.$w}px;
  height: 40px;
  margin-left: ${p => p.$ml || 0}px;
  ${p => p.$open && css`
    height: 39px;
    border: 1px solid rgba(255, 240, 210, ${p => (p.$active ? 0.95 : 0.45)});
    background: rgba(255, 240, 210, ${p => (p.$active ? 0.4 : 0.2)});
  `}
`

const SwIcon = styled.svg`
  overflow: visible;
`

const StoreTile = styled.div`
  width: 30px;
  height: 30px;
  background: #008a00;
`

const Tray = styled.div`
  position: relative;
  display: flex;
  align-items: center;
  margin-left: auto;
  padding-right: 16px;
  gap: 15px;
`

const Clock = styled.div`
  ${segoe}
  display: flex;
  flex-direction: column;
  align-items: center;
  width: 54px;
  padding-top: 2px;
  font-size: 12px;
  line-height: 17px;
  letter-spacing: -0.55px;
  color: #fff;
`
